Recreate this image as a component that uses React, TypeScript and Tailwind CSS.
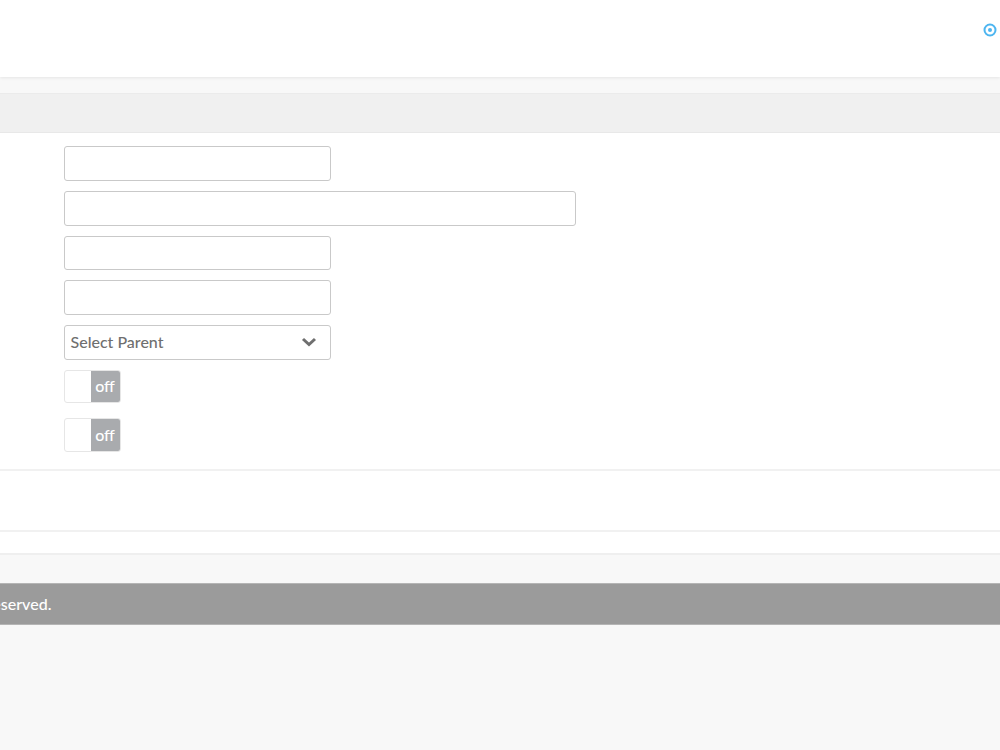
import React from "react";

function TextField({ wide = false }: { wide?: boolean }) {
  return (
    <input
      type="text"
      className={`block h-[34.75px] rounded-[3px] border border-[#c9c9c9] bg-white ${wide ? "w-[512px]" : "w-[267px]"}`}
    />
  );
}

function OffSwitch() {
  return (
    <div className="flex h-[33.5px] w-[57px] overflow-hidden rounded-[3px] border border-[#e6e6e6] bg-white">
      <div className="flex-1" />
      <div className="flex w-[29px] items-center justify-center bg-[#a9abae] pb-[1px] pr-[1px] text-[16px] font-medium text-white">off</div>
    </div>
  );
}

export default function App() {
  return (
    <div className="h-[750px] overflow-hidden bg-[#f8f8f8] font-['Lato','Noto_Sans',sans-serif]">
      <header className="flex h-[77px] items-start justify-end bg-white pr-[3px] pt-[23px] shadow-[0_1px_3px_rgba(0,0,0,0.08)]">
        <svg width="14" height="14" viewBox="0 0 14 14" fill="none">
          <circle cx="7" cy="7" r="5.5" stroke="#4db5f0" strokeWidth="2" />
          <circle cx="7" cy="7" r="2" fill="#4db5f0" />
        </svg>
      </header>

      <section className="mt-4 border-t border-[#ebebeb] bg-white">
        <div className="h-[39px] border-b border-[#e8e8e8] bg-[#f0f0f0]" />
        <div className="flex flex-col items-start gap-[10px] border-b-2 border-[#f1f1f1] pb-[17.5px] pl-[64px] pt-[13px]">
          <TextField />
          <TextField wide />
          <TextField />
          <TextField />
          <div className="flex h-[34.75px] w-[267px] items-center justify-between rounded-[3px] border border-[#c9c9c9] bg-white pl-[5.5px] pr-[13px] text-[16px] font-medium text-[#6f6f6f]">
            <span>Select Parent</span>
            <svg width="16" height="10" viewBox="0 0 16 10" fill="none">
              <path d="M2 2l6 5.5L14 2" stroke="#6f6f6f" strokeWidth="3" />
            </svg>
          </div>
          <OffSwitch />
          <div className="mt-[5px]">
            <OffSwitch />
          </div>
        </div>
        <div className="h-[61px] border-b-2 border-[#f1f1f1]" />
        <div className="h-[22.5px] border-b-2 border-[#efefef]" />
      </section>

      <footer className="mt-[28px] flex h-[42.5px] items-center border-y border-[#b5b5b5] bg-[#9b9b9b]">
        <div className="ml-[-79.5px] whitespace-nowrap text-[16px] font-medium text-white">All rights reserved.</div>
      </footer>
    </div>
  );
}
